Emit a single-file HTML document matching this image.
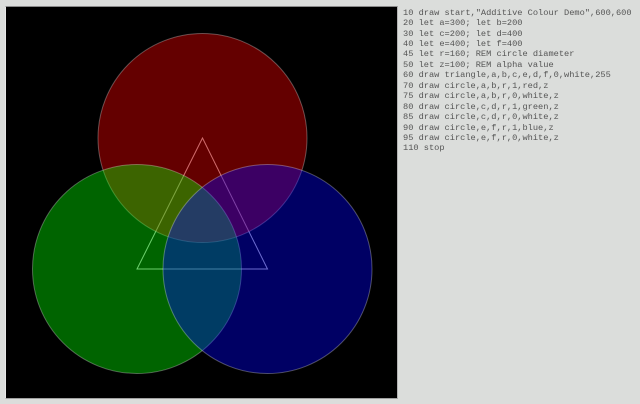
<!DOCTYPE html>
<html>
<head>
<meta charset="utf-8">
<style>
html,body{margin:0;padding:0;width:640px;height:404px;overflow:hidden;background:#dbdddb}
#c{position:absolute;left:5px;top:6px;width:391px;height:391px;background:#000;border-top:1px solid #8a8a8a;border-left:1px solid #e8e8e8;border-right:1px solid #b4b4b4;border-bottom:1px solid #a0a0a0;box-sizing:content-box}
svg{position:absolute;left:0;top:0;filter:blur(.25px)}
pre{position:absolute;left:403px;top:7.6px;margin:0;font-family:"Liberation Mono",monospace;font-size:8.67px;line-height:10.46px;color:#555;filter:blur(.25px)}
</style>
</head>
<body>
<div id="c"></div>
<svg width="640" height="404" viewBox="0 0 640 404">
<g stroke-width="1" fill="none">
<polygon points="202.5,138 137,269 267.5,269" stroke="#fff" stroke-opacity=".7" fill="none"/>
<circle cx="202.5" cy="138" r="104.5" fill="#f00" fill-opacity=".392" stroke="none"/>
<circle cx="202.5" cy="138" r="104.5" stroke="#fff" stroke-opacity=".3"/>
<circle cx="137" cy="269" r="104.5" fill="#0f0" fill-opacity=".392" stroke="none"/>
<circle cx="137" cy="269" r="104.5" stroke="#fff" stroke-opacity=".3"/>
<circle cx="267.5" cy="269" r="104.5" fill="#00f" fill-opacity=".392" stroke="none"/>
<circle cx="267.5" cy="269" r="104.5" stroke="#fff" stroke-opacity=".3"/>
</g>
</svg>
<pre>10 draw start,"Additive Colour Demo",600,600
20 let a=300; let b=200
30 let c=200; let d=400
40 let e=400; let f=400
45 let r=160; REM circle diameter
50 let z=100; REM alpha value
60 draw triangle,a,b,c,e,d,f,0,white,255
70 draw circle,a,b,r,1,red,z
75 draw circle,a,b,r,0,white,z
80 draw circle,c,d,r,1,green,z
85 draw circle,c,d,r,0,white,z
90 draw circle,e,f,r,1,blue,z
95 draw circle,e,f,r,0,white,z
110 stop</pre>
</body>
</html>
